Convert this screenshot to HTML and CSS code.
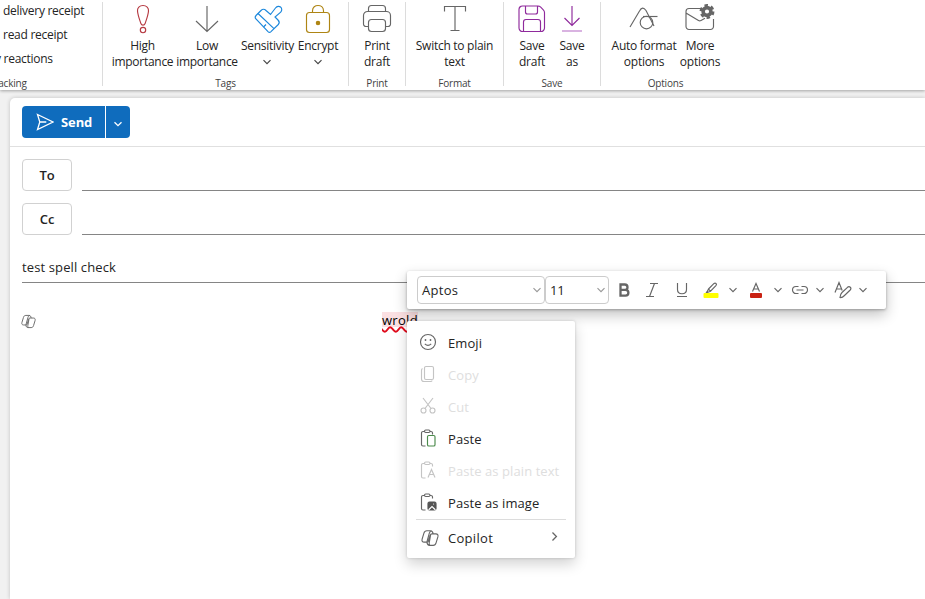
FILE: index.html
```html
<!DOCTYPE html>
<html lang="en">
<head>
<meta charset="utf-8">
<title>Mail</title>
<link rel="stylesheet" href="styles.css">
</head>
<body>
<svg width="0" height="0" class="defs">
  <symbol id="chev" viewBox="0 0 8 8"><path d="M.5 2.200 4 5.700 7.500 2.200"/></symbol>
  <symbol id="copilot" viewBox="0 0 16 16"><path d="M10.800 4.300C10.500 2.300 10 1.500 8.500 1.500H5.200C3.700 1.500 3 2.300 2.600 3.700L1 9c-.5 1.800.3 2.700 1.800 2.700h2.400C5.500 13.700 6 14.500 7.500 14.500h3.300c1.500 0 2.200-.8 2.600-2.200L15 7c.5-1.800-.3-2.700-1.800-2.700H9.800c-1 0-1.500.6-1.800 1.600l-1.500 5c-.2.600-.6.800-1.300.8M9.500 1.600C8.300 1.700 7.800 2.400 7.400 3.700L5.200 11.700M8.600 4.900 7.300 12.300Q7 14 8 14.400"/></symbol>
  <symbol id="clip" viewBox="0 0 16 18"><path d="M5 2.500H3A1.500 1.500 0 0 0 1.500 4v11.500A1.500 1.500 0 0 0 3 17h2.500M10 2.500h1A1.500 1.500 0 0 1 12.500 4v1.500"/><rect x="4.500" y="1" width="5.500" height="2.500" rx="1.200"/></symbol>
</svg>
<header class="ribbon">
  <section class="group tracking">
    <div class="checks"><span>delivery receipt</span><span>read receipt</span><span class="react">y reactions</span></div>
    <footer>Tracking</footer>
  </section>
  <section class="group tags">
    <div class="items">
      <div class="item wide">
        <svg class="red" width="32" height="32" viewBox="0 0 32 32"><path d="M16 2.500c-3.500 0-5.800 2.300-5.500 5.500.3 4 2 8.500 3.400 12.500.8 2.200 3.400 2.200 4.200 0 1.400-4 3.100-8.500 3.400-12.500.3-3.200-2-5.500-5.500-5.500Z"/><circle cx="16" cy="27" r="2.700"/></svg>
        <span>High<br>importance</span></div>
      <div class="item low">
        <svg width="32" height="32" viewBox="0 0 32 32"><path d="M16 3v25.500M5 18l11 10.500L27 18"/></svg>
        <span>Low<br>importance</span></div>
      <div class="item sens">
        <svg class="blue" width="32" height="32" viewBox="0 0 32 32"><path d="M3.500 15.500Q2.700 14 4 12.500L9 7.500q2.500-2.500 5 0l4.500 4 5-6.500c3.200-4.200 8.500.3 5.200 4.200L23 14l3 3q2.300 2.300.3 4.500L19 28.700q-1.500 1.400-3 0Z"/><path d="m6 10.500 16 15.200M11.500 24l2.500-2.500"/></svg>
        <span>Sensitivity<svg class="dd"><use href="#chev"/></svg></span></div>
      <div class="item enc">
        <svg class="gold" width="32" height="32" viewBox="0 0 32 32"><rect x="4.500" y="9.500" width="23" height="20" rx="3"/><path d="M10.500 9.500V7.700c0-7 11-7 11 0v1.800"/><circle class="goldfill" cx="16" cy="20" r="1.700"/></svg>
        <span>Encrypt<svg class="dd"><use href="#chev"/></svg></span></div>
    </div>
    <footer>Tags</footer>
  </section>
  <section class="group print">
    <div class="items"><div class="item">
      <svg width="32" height="32" viewBox="0 0 32 32"><path d="M7.500 8.500V5.500a3 3 0 0 1 3-3h11a3 3 0 0 1 3 3v3M7.500 23.500H5A2.500 2.500 0 0 1 2.500 21v-8.500a4 4 0 0 1 4-4h19a4 4 0 0 1 4 4V21a2.500 2.500 0 0 1-2.500 2.500h-2.500"/><rect x="7.500" y="16.500" width="17" height="12" rx="3"/></svg>
      <span>Print<br>draft</span></div></div>
    <footer>Print</footer>
  </section>
  <section class="group format">
    <div class="items"><div class="item">
      <svg width="32" height="32" viewBox="0 0 32 32"><path d="M5.500 8.500v-5h21v5M16 3.500v24M11.500 27.500h9"/></svg>
      <span>Switch to plain<br>text</span></div></div>
    <footer>Format</footer>
  </section>
  <section class="group save">
    <div class="items">
      <div class="item forty">
        <svg class="purple" width="32" height="32" viewBox="0 0 32 32"><path d="M6.500 3H22c1 0 2 .5 2.700 1.200l2.600 2.600C28 7.500 28.500 8.500 28.500 9.500v15.500a3.500 3.500 0 0 1-3.500 3.500H6.500A3.500 3.500 0 0 1 3 25V6.500A3.500 3.500 0 0 1 6.500 3ZM9.500 3v6a2 2 0 0 0 2 2h8a2 2 0 0 0 2-2V3M7.500 28.500V19A2.500 2.500 0 0 1 10 16.500h12a2.500 2.500 0 0 1 2.500 2.500v9.500"/></svg>
        <span>Save<br>draft</span></div>
      <div class="item forty">
        <svg class="purple" width="32" height="32" viewBox="0 0 32 32"><path d="M16 3v19.500M8.500 15l7.500 7.500L23.500 15"/><path class="pale" d="M6 28h20"/></svg>
        <span>Save<br>as</span></div>
    </div>
    <footer>Save</footer>
  </section>
  <section class="group options">
    <div class="items">
      <div class="item auto">
        <svg width="32" height="32" viewBox="0 0 32 32"><path d="M2 24 11.500 8q3-5.500 6.500-.5L26 23"/><circle cx="18.500" cy="19.500" r="6.300"/><path d="M15 13.500h14.500"/></svg>
        <span>Auto format<br>options</span></div>
      <div class="item forty">
        <svg width="32" height="32" viewBox="0 0 32 32"><path d="M17 5.500H5a3 3 0 0 0-3 3v15A3 3 0 0 0 5 26.500h21.500a3 3 0 0 0 3-3V16M2 10l12.500 7.500q1.200.7 2.500 0l4-2.200"/><circle class="gear" cx="23" cy="8.500" r="3.900"/><circle class="teeth" cx="23" cy="8.500" r="5.800"/></svg>
        <span>More<br>options</span></div>
    </div>
    <footer>Options</footer>
  </section>
</header>

<main class="compose">
  <div class="sendbar">
    <button class="send"><svg width="18" height="18" viewBox="0 0 18 18"><path d="M1.500 1.500 17 9 1.500 16.500 3.800 9ZM3.800 9h6.500"/></svg><span>Send</span></button>
    <button class="more"><svg class="dd"><use href="#chev"/></svg></button>
  </div>
  <div class="row"><button class="pick">To</button><div class="line"></div></div>
  <div class="row"><button class="pick">Cc</button><div class="line"></div></div>
  <div class="subject">test spell check</div>
  <div class="message"><svg width="15" height="15"><use href="#copilot"/></svg><span class="typo">wrold</span></div>
</main>

<div class="toolbar">
  <div class="select font">Aptos<svg class="dd"><use href="#chev"/></svg></div>
  <div class="select size">11<svg class="dd"><use href="#chev"/></svg></div>
  <div class="tools">
    <svg class="bold" width="16" height="18" viewBox="0 0 16 18"><path d="M4.500 3.500h4.300a2.700 2.700 0 0 1 0 5.400H4.500ZM4.500 8.900h5a2.900 2.900 0 0 1 0 5.800h-5Z"/></svg>
    <svg class="ital" width="16" height="18" viewBox="0 0 16 18"><path d="M6 2.500h8M2 15.500h8M10.500 2.500l-5 13"/></svg>
    <svg class="under" width="16" height="18" viewBox="0 0 16 18"><path d="M3.500 2v6.500c0 5.600 9 5.600 9 0V2M3 15.500h10"/></svg>
    <svg class="mark" width="16" height="18" viewBox="0 0 16 18"><path d="m5.500 8 5.300-5.300c1.600-1.500 3.600.4 2.100 2L7.500 10.200l-3.800 1.500L5.500 8l2 2.200M3 12l1-1.500"/><rect class="yellow" x=".5" y="12" width="15" height="5" rx="1"/></svg>
    <svg class="dd d1"><use href="#chev"/></svg>
    <svg class="color" width="14" height="18" viewBox="0 0 14 18"><path d="M3.500 10.500 7 2.500l3.500 8M4.700 8h4.600"/><rect class="redfill" x="1" y="12" width="12" height="5" rx="1"/></svg>
    <svg class="dd d2"><use href="#chev"/></svg>
    <svg class="link" width="18" height="18" viewBox="0 0 18 18"><path d="M7.500 5.500H5a3.500 3.500 0 0 0 0 7h2.500M10.500 5.500H13a3.500 3.500 0 0 1 0 7h-2.500M5.500 9h7"/></svg>
    <svg class="dd d3"><use href="#chev"/></svg>
    <svg class="style" width="18" height="18" viewBox="0 0 18 18"><path d="M1 11.500 5 1.500l3.200 8M2.500 8h5M8 11.500l5.500-5.200c2-1.800 4.500.8 2.700 2.700L10.500 14.500c-1.700 1.700-3.500 2.200-4.500 2 .2-1.700.5-3.600 2-5Z"/></svg>
    <svg class="dd d4"><use href="#chev"/></svg>
  </div>
</div>

<nav class="menu">
  <div class="entry"><svg class="ic" viewBox="0 0 18 18"><circle cx="9" cy="9" r="7.500"/><path d="M5.800 10.800q3.200 3 6.400 0"/><path class="eyes" d="M6.500 7v.02M11.500 7v.02"/></svg>Emoji</div>
  <div class="entry off"><svg class="ic" viewBox="0 0 18 18"><rect x="5.500" y="1.500" width="9" height="13" rx="1.500"/><path d="M3.500 3.500Q2.500 4 2.500 5.500V14A2.500 2.500 0 0 0 5 16.500h6.500q1.500 0 1.500-1"/></svg>Copy</div>
  <div class="entry off"><svg class="ic" viewBox="0 0 18 18"><circle cx="4.500" cy="13.500" r="2.500"/><circle cx="13.500" cy="13.500" r="2.500"/><path d="m4 1 8 10.500M14 1 6 11.500"/></svg>Cut</div>
  <div class="entry"><svg class="ic green" viewBox="0 0 16 18"><use href="#clip" width="16" height="18"/><rect x="7.500" y="6.500" width="7.500" height="10.500" rx="1.300"/></svg>Paste</div>
  <div class="entry off"><svg class="ic" viewBox="0 0 16 18"><use href="#clip" width="16" height="18"/><path d="m8 16.500 3.500-8 3.500 8M9.300 13.500h4.400"/></svg>Paste as plain text</div>
  <div class="entry"><svg class="ic" viewBox="0 0 16 18"><use href="#clip" width="16" height="18"/><rect class="picture" x="8" y="9" width="8" height="8" rx="1.500"/><path class="hill" d="m9 16.500 3-3 3 3M13.600 11v.02"/></svg>Paste as image</div>
  <hr>
  <div class="entry last"><svg class="ic" viewBox="0 0 16 16"><use href="#copilot" width="16" height="16"/></svg>Copilot<svg class="dd right"><use href="#chev"/></svg></div>
</nav>
</body>
</html>
```

FILE: styles.css
```css
* { box-sizing: border-box; }
body { margin: 0; width: 925px; height: 599px; overflow: hidden; background: #f1f1f1; color: #242424; font-family: "Open Sans", "Noto Sans", sans-serif; font-size: 13px; letter-spacing: -.05px; }
svg { fill: none; stroke: #666; stroke-width: 1.15; flex: none; }
.defs { position: absolute; }
.dd { width: 8px; height: 8px; display: block; }
button { font: inherit; letter-spacing: inherit; padding: 0; }

.ribbon { display: flex; height: 90px; background: #fff; box-shadow: 0 1px 3px rgba(0,0,0,.32); position: relative; font-size: 12px; letter-spacing: -.27px; }
.group { display: flex; flex-direction: column; height: 84px; margin-top: 2px; border-right: 1px solid #dcdcdc; }
.group footer { margin-top: auto; height: 11px; line-height: 11px; font-size: 10px; text-align: center; letter-spacing: -.2px; color: #424242; transform: translateY(3px); }
.tracking { width: 103px; }
.tracking footer { text-align: left; margin-left: -11px; }
.checks { display: flex; flex-direction: column; padding-left: 3px; margin-top: -3px; white-space: nowrap; }
.checks span { height: 24px; line-height: 24px; }
.checks .react { margin-left: -8px; }
.tags { width: 246px; }
.tags .items { padding-left: 7px; }
.print { width: 57px; }
.format { width: 98px; }
.save { width: 97px; }
.save .items { padding-left: 8px; }
.options { width: 129px; border: 0; }
.options .items { padding-left: 7px; }
.items { display: flex; }
.item { display: flex; flex-direction: column; align-items: center; width: 100%; text-align: center; line-height: 16px; white-space: nowrap; }
.item > svg { height: 32px; margin: 1px 0 3px; }
.item .dd { margin: 4px auto 0; stroke: #444; }
.wide { width: 65px; }
.low { width: 64px; }
.sens { width: 57px; }
.enc { width: 44px; }
.forty { width: 40px; }
.auto { width: 72px; }
.red { stroke: #b63a42; }
.blue { stroke: #1b87dc; }
.gold { stroke: #ae8514; }
.goldfill { fill: #ae8514; }
.purple { stroke: #8f2a9c; }
.pale { stroke: #d3a6dc; stroke-width: 1.7; }
.gear { stroke-width: 3.6; }
.teeth { stroke-width: 3.3; stroke-dasharray: 3.2 2.874; }

.compose { margin: 8px 0 0 10px; height: 501px; background: #fff; border-radius: 5px 0 0 0; box-shadow: 0 0 4px rgba(0,0,0,.2); }
.sendbar { display: flex; height: 49px; padding: 8px 0 0 12px; border-bottom: 1px solid #e0e0e0; }
.send, .more { height: 32px; border: 0; background: #0f6cbd; color: #fff; display: flex; align-items: center; }
.send { width: 83px; padding-left: 14px; gap: 7px; border-radius: 4px 0 0 4px; font-size: 13px; font-weight: 700; letter-spacing: -.1px; }
.send span { margin-top: -1px; }
.more { width: 24px; margin-left: 1px; padding-top: 3px; justify-content: center; border-radius: 0 4px 4px 0; }
.send svg, .more svg { stroke: #fff; stroke-width: 1.3; }
.row { display: flex; gap: 10px; height: 32px; margin: 12px 0 0 12px; }
.pick { width: 50px; height: 32px; border: 1px solid #d1d1d1; border-radius: 4px; background: #fff; color: #242424; font-weight: 600; letter-spacing: -.2px; }
.line { flex: 1; border-bottom: 1px solid #858585; }
.subject { height: 32px; line-height: 33px; margin: 16px 0 0 12px; border-bottom: 1px solid #858585; letter-spacing: .12px; }
.message { display: flex; margin: 29px 0 0 11px; height: 17px; }
.message svg { margin-top: 2px; stroke-width: 1; }
.typo { margin-left: 346px; width: 36px; height: 15px; line-height: 17px; letter-spacing: .3px; background: #fbe0e2; color: #000; text-decoration: underline wavy #e00b1c 1.5px; text-underline-offset: 1px; text-decoration-skip-ink: none; }

.toolbar { position: absolute; left: 407px; top: 271px; width: 479px; height: 38px; background: #fff; border-radius: 2px; box-shadow: 0 6px 14px rgba(0,0,0,.24), 0 1px 3px rgba(0,0,0,.28); display: flex; align-items: center; padding-left: 10px; }
.select { height: 28px; border: 1px solid #ccc; border-radius: 4px; display: flex; align-items: center; justify-content: space-between; padding: 0 3px 0 4px; letter-spacing: .3px; }
.select svg { stroke: #999; }
.font { width: 128px; }
.size { width: 64px; }
.size { letter-spacing: -.3px; }
.tools { display: flex; align-items: center; }
.bold { margin-left: 7px; stroke-width: 2.3; }
.ital { margin-left: 12px; }
.under { margin-left: 14px; }
.mark { margin-left: 13px; }
.yellow { fill: #ff0; stroke: none; }
.redfill { fill: #c92213; stroke: none; }
.d1 { margin-left: 10px; }
.color { margin-left: 12px; }
.d2 { margin-left: 11px; }
.link { margin-left: 9px; }
.d3 { margin-left: 7px; }
.style { margin-left: 10px; }
.d4 { margin-left: 7px; }

.menu { position: absolute; left: 407px; top: 321px; width: 168px; height: 237px; padding-top: 6px; background: #fff; border-radius: 2px; box-shadow: 0 6px 14px rgba(0,0,0,.18), 0 0 3px rgba(0,0,0,.18); letter-spacing: .08px; }
.entry { display: flex; align-items: center; height: 32px; padding-left: 12px; gap: 11px; white-space: nowrap; }
.ic { width: 18px; height: 18px; margin-top: -2px; }
.off { color: #dedede; }
.off svg { stroke: #c4c4c4; }
.green rect { stroke: #4b8a4b; }
.eyes { stroke-width: 1.8; stroke-linecap: round; }
.picture { fill: #555; stroke: #555; }
.hill { stroke: #fff; stroke-linecap: round; }
.menu hr { border: 0; border-top: 1px solid #dcdcdc; margin: 0 9px; }
.last { height: 36px; padding-left: 14px; gap: 9px; letter-spacing: .3px; }
.last .ic { stroke-width: 1; margin-top: 0; }
.right { transform: rotate(-90deg); margin-left: auto; margin-right: 16px; margin-top: -3px; width: 9px; height: 9px; }
```
